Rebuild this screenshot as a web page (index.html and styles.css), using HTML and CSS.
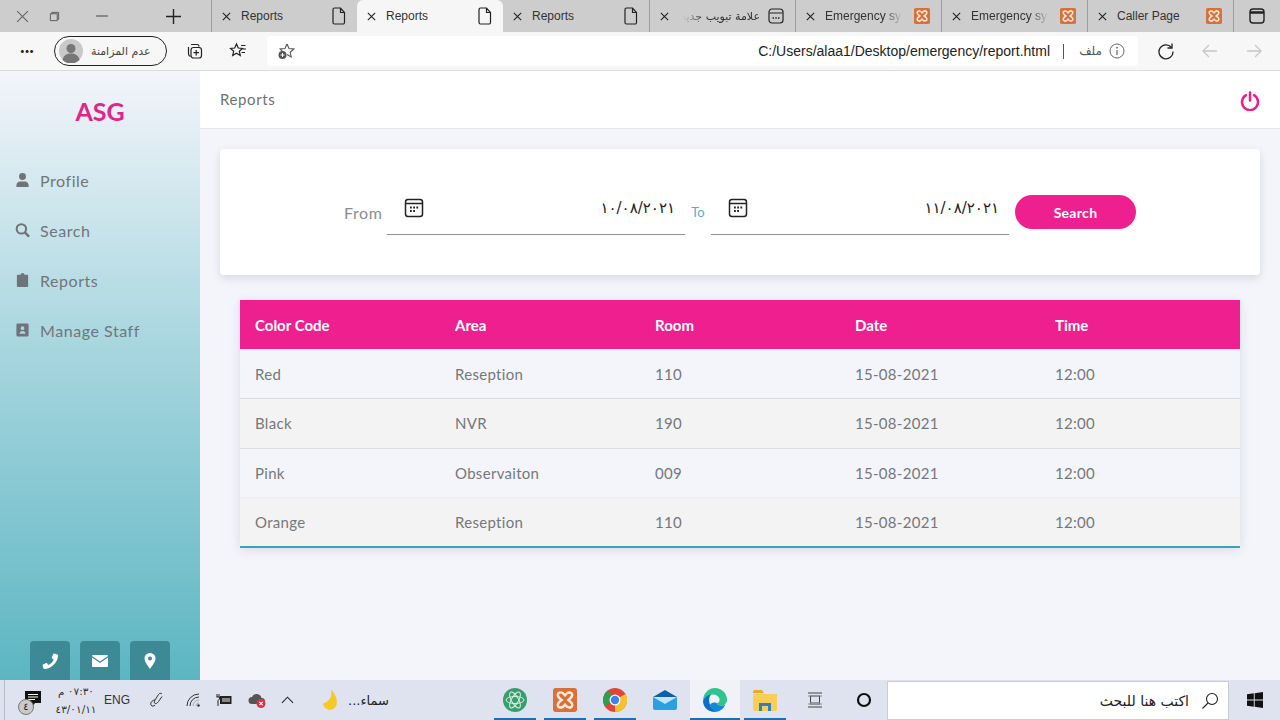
FILE: index.html
```html
<!DOCTYPE html>
<html lang="en">
<head>
<meta charset="utf-8">
<title>Reports</title>
<link rel="stylesheet" href="styles.css">
</head>
<body>
<svg class="defs" width="0" height="0" aria-hidden="true">
  <defs>
    <symbol id="x" viewBox="0 0 12 12"><path d="M2 2l8 8M10 2l-8 8" fill="none" stroke="#222" stroke-width="1.2"/></symbol>
    <symbol id="doc" viewBox="0 0 14 18"><path d="M2.5 1h6l4 4.500v10a1.500 1.500 0 0 1-1.500 1.500H2.500A1.500 1.500 0 0 1 1 15.500v-13A1.500 1.500 0 0 1 2.500 1zM8.500 1v4.500h4" fill="none" stroke="#222" stroke-width="1.200"/></symbol>
    <symbol id="xampp" viewBox="0 0 18 18"><rect width="18" height="18" rx="2" fill="#d9703a"/><path d="M4 4c2-1.500 3.500-.5 5 1.500C10.500 3.500 12 2.500 14 4c1.500 2-.5 3.500-2.500 5C13.500 10.500 15.500 12 14 14c-2 1.500-3.500.5-5-1.500C7.500 14.500 6 15.500 4 14c-1.500-2 .5-3.500 2.500-5C4.500 7.500 2.500 6 4 4z" fill="none" stroke="#fbe9dc" stroke-width="1.800"/></symbol>
    <symbol id="cal" viewBox="0 0 20 20"><rect x="1.500" y="1.500" width="17" height="17" rx="2.500" fill="none" stroke="#222" stroke-width="1.500"/><path d="M2 5.500h16" stroke="#222" stroke-width="1.500"/><path d="M6 9.500h1.800M9.200 9.500H11M12.400 9.500h1.800M6 13h1.800M9.200 13H11" stroke="#222" stroke-width="1.800"/></symbol>
  </defs>
</svg>

<div class="tabbar">
  <div class="win-ctrls">
    <svg class="wc" viewBox="0 0 12 12"><path d="M1 1l10 10M11 1L1 11" fill="none" stroke="#666" stroke-width="1"/></svg>
    <svg class="wc" viewBox="0 0 12 12"><path d="M3 3V1.500h7.500V9H9M1.500 3H9v7.500H1.500z" fill="none" stroke="#555" stroke-width="1"/></svg>
    <svg class="wc" viewBox="0 0 12 12"><path d="M1 6h10" stroke="#555" stroke-width="1"/></svg>
    <svg class="plus" viewBox="0 0 14 14"><path d="M7 0v14M0 7h14" stroke="#222" stroke-width="1.300"/></svg>
  </div>
  <div class="tab sep"><svg class="tab-x"><use href="#x"/></svg><span class="tab-t">Reports</span><svg class="tab-i"><use href="#doc"/></svg></div>
  <div class="tab active"><svg class="tab-x"><use href="#x"/></svg><span class="tab-t">Reports</span><svg class="tab-i"><use href="#doc"/></svg></div>
  <div class="tab"><svg class="tab-x"><use href="#x"/></svg><span class="tab-t">Reports</span><svg class="tab-i"><use href="#doc"/></svg></div>
  <div class="tab sep"><svg class="tab-x"><use href="#x"/></svg><span class="tab-t fade ar" dir="rtl">علامة تبويب جديدة</span>
    <svg class="tab-i wide" viewBox="0 0 16 16"><rect x="1" y="1" width="14" height="14" rx="3" fill="none" stroke="#222" stroke-width="1.200"/><path d="M1.500 5h13" stroke="#222"/><path d="M4.500 10h1.500M7.300 10h1.500M10 10h1.500" stroke="#222" stroke-width="1.500"/></svg></div>
  <div class="tab sep"><svg class="tab-x"><use href="#x"/></svg><span class="tab-t fade">Emergency system</span><svg class="tab-i wide"><use href="#xampp"/></svg></div>
  <div class="tab sep"><svg class="tab-x"><use href="#x"/></svg><span class="tab-t fade">Emergency system</span><svg class="tab-i wide"><use href="#xampp"/></svg></div>
  <div class="tab sep"><svg class="tab-x"><use href="#x"/></svg><span class="tab-t">Caller Page</span><svg class="tab-i wide"><use href="#xampp"/></svg></div>
  <div class="tab-end sep">
    <svg class="tabs-ico" viewBox="0 0 16 16"><rect x="1" y="1" width="14" height="14" rx="3" fill="none" stroke="#222" stroke-width="1.400"/><path d="M1 4.500h14" stroke="#222" stroke-width="2.500"/></svg>
  </div>
</div>

<div class="toolbar">
  <span class="dots">•••</span>
  <div class="profile">
    <svg class="avatar" viewBox="0 0 24 24"><circle cx="12" cy="12" r="12" fill="#c9c9c9"/><circle cx="12" cy="9.500" r="4.500" fill="#777"/><path d="M3.500 21c1-5 4.500-6.500 8.500-6.500s7.500 1.500 8.500 6.500a12 12 0 0 1-17 0z" fill="#777"/></svg>
    <span class="ar" dir="rtl">عدم المزامنة</span>
  </div>
  <svg class="tool-ico collections" viewBox="0 0 18 18"><path d="M6 2.500h6a2 2 0 0 1 2 2M3.500 5v7a3 3 0 0 0 2 2.500" fill="none" stroke="#222" stroke-width="1.200"/><rect x="6" y="5.500" width="10.500" height="10.500" rx="2.500" fill="none" stroke="#222" stroke-width="1.200"/><path d="M11.200 8v5.500M8.500 10.700H14" stroke="#222" stroke-width="1.200"/></svg>
  <svg class="tool-ico favs" viewBox="0 0 18 18"><path d="M7.500 2l1.800 4 4.200.4-3.200 2.900 1 4.200-3.800-2.200-3.800 2.200 1-4.200L1.500 6.400l4.200-.4z" fill="none" stroke="#222" stroke-width="1.200"/><path d="M12 3.500h4.500M13.500 7H17M12.500 10.500H16" stroke="#222" stroke-width="1.200"/></svg>
  <div class="address">
    <svg class="star" viewBox="0 0 18 18"><path d="M10 2l2 4.500 4.800.5-3.600 3.300 1 4.700-4.200-2.400" fill="none" stroke="#555" stroke-width="1.100"/><path d="M10 2L8 6.500 3.200 7l2 2" fill="none" stroke="#555" stroke-width="1.100"/><circle cx="5.500" cy="13" r="4" fill="#555"/><path d="M5.500 11v4M3.500 13h4" stroke="#fff" stroke-width="1"/></svg>
    <span class="url">C:/Users/alaa1/Desktop/emergency/report.html</span>
    <span class="addr-sep"></span>
    <span class="file-lbl ar" dir="rtl">ملف</span>
    <svg class="info" viewBox="0 0 16 16"><circle cx="8" cy="8" r="7" fill="none" stroke="#666" stroke-width="1"/><path d="M8 7v5" stroke="#666" stroke-width="1.200"/><circle cx="8" cy="4.700" r=".9" fill="#666"/></svg>
  </div>
  <svg class="nav-ico refresh" viewBox="0 0 18 18"><path d="M14.500 5.500A7 7 0 1 0 16 9.500" fill="none" stroke="#222" stroke-width="1.300"/><path d="M15 1.500v4.500h-4.500" fill="none" stroke="#222" stroke-width="1.300"/></svg>
  <svg class="nav-ico back" viewBox="0 0 18 18"><path d="M16 9H2M8 3L2 9l6 6" fill="none" stroke="#c8c8c8" stroke-width="1.300"/></svg>
  <svg class="nav-ico fwd" viewBox="0 0 18 18"><path d="M2 9h14M10 3l6 6-6 6" fill="none" stroke="#c8c8c8" stroke-width="1.300"/></svg>
</div>

<div class="app">
  <aside class="sidebar">
    <div class="logo">ASG</div>
    <nav class="menu">
      <a class="menu-item">
        <svg class="m-ico" viewBox="0 0 16 16"><circle cx="8" cy="4.200" r="3.700"/><path d="M1.500 15.500v-2c0-2.500 2-4 4-4h5c2 0 4 1.500 4 4v2z"/></svg>Profile</a>
      <a class="menu-item">
        <svg class="m-ico" viewBox="0 0 16 16"><circle cx="6.800" cy="6.800" r="5" fill="none" stroke="#6f7478" stroke-width="2.200"/><path d="M10.500 10.500l4.500 4.500" stroke="#6f7478" stroke-width="2.600"/></svg>Search</a>
      <a class="menu-item">
        <svg class="m-ico" viewBox="0 0 16 16"><path d="M3 2.500h3a2 2 0 0 1 4 0h3a1 1 0 0 1 1 1v11a1 1 0 0 1-1 1H3a1 1 0 0 1-1-1v-11a1 1 0 0 1 1-1z"/></svg>Reports</a>
      <a class="menu-item">
        <svg class="m-ico" viewBox="0 0 16 16"><path fill-rule="evenodd" d="M3 1h10a1.500 1.500 0 0 1 1.500 1.500v11A1.500 1.500 0 0 1 13 15H3a1.500 1.500 0 0 1-1.500-1.500v-11A1.500 1.500 0 0 1 3 1zm5 3a2 2 0 1 0 0 4 2 2 0 0 0 0-4zM4.800 12h6.400c0-1.800-1.400-3-3.200-3s-3.200 1.200-3.200 3z"/></svg>Manage Staff</a>
    </nav>
    <div class="social">
      <a class="soc-btn"><svg viewBox="0 0 16 16"><path d="M15.500 1.500l-3.300-.9c-.4-.1-.7.1-.9.4l-1.500 3.500c-.1.300 0 .6.200.8l1.800 1.500a11 11 0 0 1-5.300 5.300l-1.500-1.800c-.2-.2-.5-.3-.8-.2L1 11.600c-.3.200-.5.500-.4.900l.9 3c.1.300.4.500.7.500C9.200 16 16 9.300 16 2.200c0-.3-.2-.6-.5-.7z" fill="#fff"/></svg></a>
      <a class="soc-btn"><svg viewBox="0 0 16 16"><path d="M0 4.500V13a1 1 0 0 0 1 1h14a1 1 0 0 0 1-1V4.500L8 10z" fill="#fff"/><path d="M1 2h14a1 1 0 0 1 1 1l-8 5.500L0 3a1 1 0 0 1 1-1z" fill="#fff"/></svg></a>
      <a class="soc-btn"><svg viewBox="0 0 16 16"><path fill-rule="evenodd" d="M8 0a5.500 5.500 0 0 1 5.500 5.500C13.500 9 10 12.800 8 16 6 12.800 2.500 9 2.500 5.500A5.500 5.500 0 0 1 8 0zm0 3.500a2 2 0 1 0 0 4 2 2 0 0 0 0-4z" fill="#fff"/></svg></a>
    </div>
  </aside>

  <main class="main">
    <header class="topbar">
      <span class="page-title">Reports</span>
      <svg class="power" viewBox="0 0 20 20"><path d="M6 4.200a8 8 0 1 0 8 0" fill="none" stroke="#e91e8c" stroke-width="2.500" stroke-linecap="round"/><path d="M10 1.500v8" stroke="#e91e8c" stroke-width="2.500" stroke-linecap="round"/></svg>
    </header>
    <div class="content">
      <section class="filter-card">
        <label class="lbl-from">From</label>
        <div class="date-input">
          <svg class="cal-ico"><use href="#cal"/></svg>
          <span class="date-val" dir="ltr">١٠/٠٨/٢٠٢١</span>
        </div>
        <label class="lbl-to">To</label>
        <div class="date-input">
          <svg class="cal-ico"><use href="#cal"/></svg>
          <span class="date-val" dir="ltr">١١/٠٨/٢٠٢١</span>
        </div>
        <button class="search-btn">Search</button>
      </section>
      <table class="report">
        <thead>
          <tr><th>Color Code</th><th>Area</th><th>Room</th><th>Date</th><th>Time</th></tr>
        </thead>
        <tbody>
          <tr><td>Red</td><td>Reseption</td><td>110</td><td>15-08-2021</td><td>12:00</td></tr>
          <tr><td>Black</td><td>NVR</td><td>190</td><td>15-08-2021</td><td>12:00</td></tr>
          <tr><td>Pink</td><td>Observaiton</td><td>009</td><td>15-08-2021</td><td>12:00</td></tr>
          <tr><td>Orange</td><td>Reseption</td><td>110</td><td>15-08-2021</td><td>12:00</td></tr>
        </tbody>
      </table>
    </div>
  </main>
</div>

<footer class="taskbar">
  <div class="tray">
    <div class="notif">
      <svg class="notif-ico" viewBox="0 0 16 16"><path d="M0 0h16v12h-6l-3 4v-4H0z" fill="#111"/><path d="M3 3.500h10M3 6h10M3 8.500h7" stroke="#fff" stroke-width="1"/></svg>
      <span class="notif-badge ar">٤</span>
    </div>
    <div class="clock ar"><span dir="rtl">٠٧:٣٠ م</span><span dir="ltr">٤٣/٠١/١١</span></div>
    <span class="lang">ENG</span>
    <svg class="tray-ico pen" viewBox="0 0 16 16"><path d="M14 2c-1-1-2.500-1-3.500.5L7 8c-1 1.500-1 3 0 3.500s2.500-.5 3.500-2l3.500-5M7 8C5 8 2 10 3 13c.5 1.500 3 1.500 4 0" fill="none" stroke="#333" stroke-width="1"/></svg>
    <svg class="tray-ico wifi" viewBox="0 0 16 16"><path d="M2 14A12 12 0 0 1 14 2M5 14a9 9 0 0 1 9-9" fill="none" stroke="#333" stroke-width="1"/><path d="M8 14a6 6 0 0 1 6-6M11 14a3 3 0 0 1 3-3" fill="none" stroke="#aaa" stroke-width="1"/><circle cx="13.500" cy="13.500" r="1.200" fill="#333"/></svg>
    <svg class="tray-ico batt" viewBox="0 0 16 14"><rect x="4" y="3" width="11.500" height="8" fill="#222"/><path d="M1 1v3M3 1v3M.5 4h3v2l-1.500 1.500V13" fill="none" stroke="#222" stroke-width="1"/><rect x="6" y="5" width="8" height="4" fill="#888"/></svg>
    <svg class="tray-ico cloud" viewBox="0 0 18 16"><path d="M4 12a3.500 3.500 0 0 1 0-7 5 5 0 0 1 9.500 1 3 3 0 0 1 1 6z" fill="#555"/><circle cx="13" cy="11.500" r="4.500" fill="#e0304a"/><path d="M11.300 9.800l3.400 3.400M14.700 9.800l-3.400 3.400" stroke="#fff" stroke-width="1.100"/></svg>
    <svg class="tray-ico chev" viewBox="0 0 14 8"><path d="M1 7l6-6 6 6" fill="none" stroke="#222" stroke-width="1.100"/></svg>
    <svg class="tray-ico moon" viewBox="0 0 20 24"><path d="M12 1c2 6-1 13-9 15 1.500 4 5 7 9 6.500 5-.5 7-5 6.500-9.500C18 8 15.500 3 12 1z" fill="#f6c927"/></svg>
    <span class="weather ar" dir="rtl">سماء...</span>
  </div>
  <div class="apps">
    <div class="app-btn run"><svg viewBox="0 0 24 24"><circle cx="12" cy="12" r="12" fill="#3a9d6e"/><g fill="none" stroke="#d8f0e0" stroke-width="1"><ellipse cx="12" cy="12" rx="9" ry="3.500" transform="rotate(60 12 12)"/><ellipse cx="12" cy="12" rx="9" ry="3.500" transform="rotate(-60 12 12)"/><ellipse cx="12" cy="12" rx="9" ry="3.500"/></g></svg></div>
    <div class="app-btn run"><svg viewBox="0 0 18 18"><use href="#xampp"/></svg></div>
    <div class="app-btn run"><svg viewBox="0 0 24 24"><circle cx="12" cy="12" r="12" fill="#e0453a"/><path d="M12 12L1.600 18A12 12 0 0 1 5 2.300z" fill="#2f9e4f"/><path d="M12 12L22.400 6A12 12 0 0 1 12 24z" fill="#f6c32c"/><circle cx="12" cy="12" r="5.500" fill="#fff"/><circle cx="12" cy="12" r="4.200" fill="#3f82ea"/></svg></div>
    <div class="app-btn"><svg viewBox="0 0 24 20"><path d="M0 7L12 0l12 7z" fill="#0d5fa8"/><path d="M0 7h24v11a2 2 0 0 1-2 2H2a2 2 0 0 1-2-2z" fill="#2b9fe0"/><path d="M0 7l12 7 12-7" fill="#bfe6fa"/></svg></div>
    <div class="app-btn run current"><svg viewBox="0 0 24 24"><path d="M12 0a12 12 0 0 1 12 12c0 3.500-3 5.500-6 5.500-2.500 0-4.500-1-4.500-2.500 2.500 0 3.500-2 3-4C15.500 7 11 5.500 7 7 4 8.500 1.500 11 0 13 0 6 5 0 12 0z" fill="#2fc48d"/><path d="M0 13c1.500-3 4-6 8-6.500-2 2.500-2.500 6-1 10 1 3 3 5.500 6 7.400C5 24.500 0 19 0 13z" fill="#0f6fc6"/><path d="M7 17c1-2 3-3 6.500-2 0 1.500 2 2.500 4.500 2.500 2 0 3.500-.5 4.500-1.500A12 12 0 0 1 13 24c-3-1.500-5-4-6-7z" fill="#0c8bd8"/></svg></div>
    <div class="app-btn run"><svg viewBox="0 0 24 22"><path d="M0 3a2 2 0 0 1 2-2h7l2 3H0z" fill="#e8a92e"/><path d="M0 5h24v15a2 2 0 0 1-2 2H2a2 2 0 0 1-2-2z" fill="#f7cf57"/><path d="M6 14h12v8h-3v-5H9v5H6z" fill="#2f7fc1"/></svg></div>
    <div class="app-btn"><svg class="small" viewBox="0 0 16 16"><path d="M1 1h14M1 15h14" stroke="#444" stroke-width="1"/><rect x="3.500" y="4" width="9" height="8" fill="none" stroke="#444"/><path d="M1 4h2.500M1 12h2.500M12.500 4H15M12.500 12H15" stroke="#888"/><rect x="3.500" y="10" width="9" height="2" fill="#999"/></svg></div>
    <div class="app-btn cortana"><svg class="small" viewBox="0 0 16 16"><circle cx="8" cy="8" r="6" fill="none" stroke="#111" stroke-width="2.200"/></svg></div>
  </div>
  <div class="task-search">
    <span class="ar" dir="rtl">اكتب هنا للبحث</span>
    <svg class="search-ico" viewBox="0 0 18 18"><circle cx="11" cy="7" r="5.500" fill="none" stroke="#222" stroke-width="1.100"/><path d="M7 11L1.500 16.500" stroke="#222" stroke-width="1.100"/></svg>
  </div>
  <div class="start"><svg viewBox="0 0 16 16"><path d="M0 2.300L6.800 1.300V7.600H0zM7.700 1.200L16 0V7.600H7.700zM0 8.400H6.800V14.700L0 13.700zM7.700 8.400H16V16L7.700 14.800z" fill="#111"/></svg></div>
</footer>
</body>
</html>
```
FILE: styles.css
```css
* { box-sizing: border-box; }
html, body { margin: 0; height: 720px; overflow: hidden; }
body {
  display: flex;
  flex-direction: column;
  width: 1280px;
  font-family: "Lato", "DejaVu Sans", sans-serif;
  color: #6f7274;
  background: #f3f5fa;
}
.defs { position: absolute; }
.ar { font-family: "DejaVu Sans", "Noto Sans", sans-serif; }

/* browser tab strip */
.tabbar {
  display: flex;
  height: 32px;
  flex: none;
  background: #cdcdcd;
  align-items: stretch;
}
.win-ctrls { display: flex; align-items: center; width: 211px; flex: none; }
.wc { width: 13px; height: 13px; margin-left: 16px; margin-right: 17px; }
.wc:nth-child(2) { width: 11px; height: 11px; margin-left: 3px; margin-right: 24px; }
.wc:nth-child(3) { width: 14px; height: 14px; margin-left: 11px; margin-right: 0; }
.plus { width: 15px; height: 15px; margin-left: 57px; }
.tab {
  width: 146px;
  flex: none;
  display: flex;
  align-items: center;
  padding-left: 9px;
  padding-right: 11px;
  position: relative;
  font-family: "Liberation Sans", "DejaVu Sans", sans-serif;
  font-size: 12px;
  color: #333;
}
.tab.active { background: #f6f6f6; border-radius: 6px 6px 0 0; }
.sep { border-left: 1px solid #9d9d9d; }
.sep { background-clip: padding-box; }
.tab-x { width: 11px; height: 11px; flex: none; margin-right: 9px; }
.tab-t { flex: 1; white-space: nowrap; overflow: hidden; min-width: 0; text-align: left; }
.tab-t.fade { -webkit-mask-image: linear-gradient(90deg, #000 75%, transparent 95%); mask-image: linear-gradient(90deg, #000 75%, transparent 95%); }
.tab-t.ar { font-size: 11px; text-align: right; -webkit-mask-image: linear-gradient(270deg, #000 70%, transparent 95%); mask-image: linear-gradient(270deg, #000 70%, transparent 95%); }
.tab-i { width: 14px; height: 18px; flex: none; margin-left: 8px; }
.tab-i.wide { width: 16px; height: 16px; }
.tab-end { flex: 1; display: flex; align-items: center; padding-left: 15px; }
.tabs-ico { width: 16px; height: 16px; }

/* browser toolbar */
.toolbar {
  height: 39px;
  flex: none;
  display: flex;
  align-items: center;
  background: #f7f7f8;
  border-bottom: 1px solid #d8dbe0;
}
.dots { width: 54px; flex: none; text-align: center; font-size: 8px; color: #222; letter-spacing: 0; }
.profile {
  width: 113px;
  height: 30px;
  flex: none;
  display: flex;
  align-items: center;
  gap: 8px;
  padding-left: 4px;
  border: 1px solid #222;
  border-radius: 15px;
  font-size: 11px;
  color: #444;
}
.avatar { width: 24px; height: 24px; flex: none; }
.tool-ico { width: 18px; height: 18px; flex: none; }
.collections { margin-left: 18px; }
.favs { margin-left: 26px; }
.address {
  width: 871px;
  height: 30px;
  flex: none;
  margin-left: 20px;
  display: flex;
  align-items: center;
  padding-left: 10px;
  padding-right: 13px;
  background: #fff;
  border-radius: 4px;
}
.star { width: 18px; height: 18px; flex: none; margin-right: auto; }
.url { font-family: "Liberation Sans", sans-serif; font-size: 14px; color: #222; white-space: nowrap; }
.addr-sep { width: 1px; height: 15px; background: #555; margin: 0 12px 0 13px; }
.file-lbl { font-size: 12px; color: #555; width: 26px; }
.info { width: 16px; height: 16px; margin-left: 7px; }
.nav-ico { width: 18px; height: 18px; flex: none; }
.refresh { margin-left: 19px; }
.back { margin-left: 26px; }
.fwd { margin-left: 26px; }

/* page */
.app { flex: 1; display: flex; min-height: 0; }
.sidebar {
  width: 200px;
  flex: none;
  display: flex;
  flex-direction: column;
  background: linear-gradient(180deg, #f3f5fa 0%, #a8d6df 45%, #5cb6c2 100%);
  overflow: hidden;
}
.logo {
  height: 84px;
  padding-top: 25px;
  text-align: center;
  font-size: 25px;
  line-height: 30px;
  font-weight: 700;
  color: #e0268a;
}
.menu { display: flex; flex-direction: column; }
.menu-item {
  height: 50px;
  display: flex;
  align-items: center;
  padding-left: 15px;
  gap: 10px;
  font-size: 16px;
  letter-spacing: .55px;
  color: #70767a;
}
.m-ico { width: 15px; height: 16px; fill: #6f7478; flex: none; }
.social { margin-top: auto; display: flex; gap: 10px; padding-left: 30px; }
.soc-btn {
  width: 40px;
  height: 39px;
  border-radius: 4px 4px 0 0;
  background: #3d8a96;
  display: flex;
  align-items: center;
  justify-content: center;
}
.soc-btn svg { width: 16px; height: 16px; }

.main { flex: 1; min-width: 0; display: flex; flex-direction: column; }
.topbar {
  height: 58px;
  flex: none;
  background: #fff;
  border-bottom: 1px solid #e3e5ea;
  display: flex;
  align-items: center;
  justify-content: space-between;
  padding: 0 20px;
}
.page-title { font-size: 15px; letter-spacing: .6px; color: #6f7274; margin-bottom: 2px; }
.power { width: 20px; height: 20px; margin-top: 3px; }
.content { flex: 1; padding: 20px 20px 0; }
.filter-card {
  height: 126px;
  background: #fff;
  border-radius: 4px;
  box-shadow: 0 3px 8px rgba(60, 70, 90, .16);
  display: flex;
  align-items: center;
  padding-left: 124px;
}
.lbl-from { font-size: 16px; letter-spacing: .6px; color: #8a8d90; width: 43px; margin-right: 0; }
.lbl-to { font-size: 13px; color: #5aaec0; width: 26px; text-align: center; margin-top: 0; }
.date-input {
  width: 298px;
  height: 50px;
  flex: none;
  margin-top: -5px;
  display: flex;
  align-items: center;
  justify-content: space-between;
  padding: 0 10px 3px 17px;
  border-bottom: 1px solid #8e8e8e;
}
.cal-ico { width: 20px; height: 20px; flex: none; }
.date-val { font-family: "DejaVu Sans", sans-serif; font-size: 15px; color: #222; letter-spacing: 1.5px; }
.search-btn {
  width: 121px;
  height: 34px;
  margin-left: 6px;
  border: 0;
  border-radius: 17px;
  background: #ee2090;
  color: #fff;
  font-family: inherit;
  font-size: 14px;
  font-weight: 700;
  letter-spacing: .3px;
}
.report {
  width: 1000px;
  margin: 25px 0 0 20px;
  border-collapse: collapse;
  table-layout: fixed;
  box-shadow: 0 2px 10px rgba(60, 70, 90, .14);
  border-bottom: 2px solid #3ba3b6;
}
.report th {
  height: 49px;
  padding: 0 15px;
  background: #ee2090;
  color: #fff;
  font-size: 15px;
  font-weight: 700;
  text-align: left;
}
.report td {
  height: 49.500px;
  padding: 0 15px;
  font-size: 15px;
  letter-spacing: .3px;
  color: #75787a;
  background: #f3f5fa;
  border-top: 1px solid #dcdee2;
}
.report tbody tr:nth-child(even) td { background: #f3f3f4; }
.report tbody tr:first-child td { border-top: 0; }
.report tbody tr:last-child td { border-top-color: #eceef1; }

/* OS taskbar */
.taskbar {
  height: 40px;
  flex: none;
  display: flex;
  align-items: stretch;
  background: #dfe3ef;
}
.tray {
  width: 490px;
  flex: none;
  display: flex;
  align-items: center;
  padding-left: 4px;
  position: relative;
  font-size: 12px;
  color: #222;
}
.tray::before { content: ""; width: 1px; height: 40px; background: #b8bbc4; flex: none; }
.notif { position: relative; width: 50px; height: 40px; flex: none; display: flex; align-items: center; justify-content: center; }
.notif-ico { width: 16px; height: 16px; margin-left: 6px; margin-top: -3px; }
.notif-badge {
  position: absolute;
  left: 13px;
  top: 19px;
  width: 16px;
  height: 16px;
  border-radius: 50%;
  background: #c9c9c9;
  border: 1px solid #777;
  font-size: 10px;
  line-height: 14px;
  text-align: center;
}
.clock {
  width: 42px;
  flex: none;
  display: flex;
  flex-direction: column;
  align-items: center;
  font-size: 10.500px;
  line-height: 18px;
  color: #333;
}
.lang { font-family: "Liberation Sans", sans-serif; width: 40px; text-align: center; flex: none; color: #333; }
.tray-ico { flex: none; width: 16px; height: 16px; }
.pen { margin-left: 11px; }
.wifi { margin-left: 21px; }
.batt { margin-left: 15px; }
.cloud { margin-left: 16px; width: 18px; }
.chev { margin-left: 15px; width: 13px; height: 8px; }
.moon { margin-left: 25px; width: 20px; height: 22px; }
.weather { margin-left: 9px; font-size: 13px; color: #222; }
.apps { display: flex; flex: none; width: 397px; }
.app-btn {
  width: 50px;
  flex: none;
  display: flex;
  align-items: center;
  justify-content: center;
  position: relative;
}
.app-btn svg { width: 24px; height: 24px; }
.app-btn svg.small { width: 16px; height: 16px; }
.app-btn.run::after {
  content: "";
  position: absolute;
  left: 4px;
  right: 4px;
  bottom: 0;
  height: 2px;
  background: #1a6fb5;
}
.app-btn.current { background: #f0f2f8; }
.app-btn.current::after { left: 0; right: 0; }
.cortana { width: 47px; }
.task-search {
  width: 342px;
  flex: none;
  margin-top: 1px;
  background: #fff;
  border: 1px solid #c9ccd3;
  display: flex;
  align-items: center;
  justify-content: flex-end;
  gap: 12px;
  padding-right: 9px;
  font-size: 14px;
  color: #222;
}
.search-ico { width: 18px; height: 18px; flex: none; }
.start { flex: 1; display: flex; align-items: center; justify-content: center; }
.start svg { width: 16px; height: 16px; }
```
